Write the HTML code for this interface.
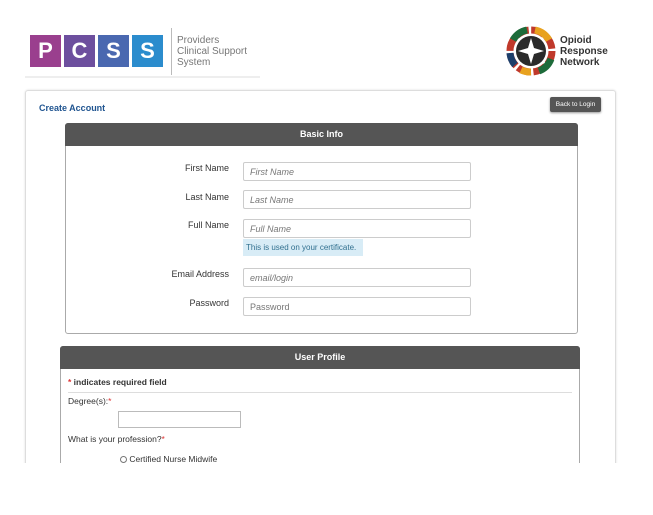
<!DOCTYPE html>
<html><head><style>
*{box-sizing:border-box;margin:0;padding:0}
body{width:653px;height:515px;background:#fff;font-family:"Liberation Sans",Arial,sans-serif;position:relative;overflow:hidden;color:#333}
.a{position:absolute}
.sq{position:absolute;top:35px;width:31px;height:32px;color:#fff;font-size:22px;font-weight:bold;text-align:center;line-height:32px}
.lbl{position:absolute;font-size:9px;color:#333;text-align:right;width:120px;left:109px}
.inp{position:absolute;left:243px;width:228px;height:19px;border:1px solid #ccc;border-radius:2px;font-size:9px;color:#777;font-style:italic;padding:5px 6px;line-height:9px}
.hdr{position:absolute;background:#555;color:#fff;font-weight:bold;font-size:9px;text-align:center;border-radius:3px 3px 0 0}
</style></head><body>
<div class="sq" style="left:30px;background:#9a3f8e">P</div>
<div class="sq" style="left:64px;background:#6d4f9e">C</div>
<div class="sq" style="left:98px;background:#4a68b0">S</div>
<div class="sq" style="left:132px;background:#2b8ccd">S</div>
<div class="a" style="left:171px;top:28px;width:1px;height:47px;background:#bbb"></div>
<div class="a" style="left:177px;top:35px;font-size:10px;line-height:11px;color:#777">Providers<br>Clinical Support<br>System</div>
<div class="a" style="left:25px;top:76px;width:235px;height:2px;background:#eee"></div>
<svg class="a" style="left:505px;top:25px" width="52" height="52" viewBox="0 0 52 52">
<g fill="none" stroke-width="7">
<circle cx="26" cy="26" r="21" stroke="#c0392b" stroke-dasharray="14 2.5" />
<path d="M8 15 A21 21 0 0 1 22 5" stroke="#1d6b3a"/>
<path d="M30 5 A21 21 0 0 1 44 15" stroke="#e8a21f"/>
<path d="M5 28 A21 21 0 0 0 10 40" stroke="#1d3f6b"/>
<path d="M34 46 A21 21 0 0 0 46 34" stroke="#1d6b3a"/>
<path d="M16 45 A21 21 0 0 0 26 47" stroke="#e8a21f"/>
</g>
<circle cx="26" cy="26" r="15" fill="#2a2a2a"/>
<path d="M26 13 L29 23 L39 26 L29 29 L26 39 L23 29 L13 26 L23 23Z" fill="#fff"/>
</svg>
<div class="a" style="left:560px;top:35px;font-size:10px;line-height:11px;font-weight:bold;color:#333">Opioid<br>Response<br>Network</div>

<div class="a" style="left:25px;top:90px;width:591px;height:380px;border:1px solid #ddd;border-radius:3px;box-shadow:0 0 2px #ddd"></div>
<div class="a" style="left:39px;top:103px;font-size:9px;font-weight:bold;color:#1f5490">Create Account</div>
<div class="a" style="left:550px;top:97px;width:51px;height:15px;background:#555;color:#fff;font-size:6.5px;text-align:center;line-height:15px;border-radius:2px;box-shadow:0 1px 2px #999;white-space:nowrap">Back to Login</div>

<div class="a" style="left:65px;top:123px;width:513px;height:211px;border:1px solid #aaa;border-radius:3px;background:#fff"></div>
<div class="hdr" style="left:65px;top:123px;width:513px;height:23px;line-height:23px">Basic Info</div>
<div class="lbl" style="top:163px">First Name</div>
<div class="inp" style="top:162px">First Name</div>
<div class="lbl" style="top:192px">Last Name</div>
<div class="inp" style="top:190px">Last Name</div>
<div class="lbl" style="top:220px">Full Name</div>
<div class="inp" style="top:219px">Full Name</div>
<div class="a" style="left:243px;top:239px;width:120px;height:17px;background:#d8ecf6;color:#31708f;font-size:8px;line-height:17px;padding-left:3px;white-space:nowrap;overflow:hidden">This is used on your certificate.</div>
<div class="lbl" style="top:269px">Email Address</div>
<div class="inp" style="top:268px">email/login</div>
<div class="lbl" style="top:298px">Password</div>
<div class="inp" style="top:297px;font-style:normal">Password</div>

<div class="a" style="left:60px;top:346px;width:520px;height:130px;border:1px solid #aaa;border-radius:3px"></div>
<div class="hdr" style="left:60px;top:346px;width:520px;height:23px;line-height:23px">User Profile</div>
<div class="a" style="left:68px;top:377px;font-size:8.5px;font-weight:bold;color:#333"><span style="color:#d33">*</span> indicates required field</div>
<div class="a" style="left:68px;top:392px;width:504px;height:1px;background:#ddd"></div>
<div class="a" style="left:68px;top:396px;font-size:8.5px">Degree(s):<span style="color:#d33">*</span></div>
<div class="a" style="left:118px;top:411px;width:123px;height:17px;border:1px solid #bbb"></div>
<div class="a" style="left:68px;top:434px;font-size:8.5px">What is your profession?<span style="color:#d33">*</span></div>
<div class="a" style="left:120px;top:454px;font-size:8.5px"><span style="display:inline-block;width:7px;height:7px;border:1px solid #777;border-radius:50%;vertical-align:-1px"></span> Certified Nurse Midwife</div>
<div class="a" style="left:0;top:463px;width:653px;height:52px;background:#fff"></div>
</body></html>
